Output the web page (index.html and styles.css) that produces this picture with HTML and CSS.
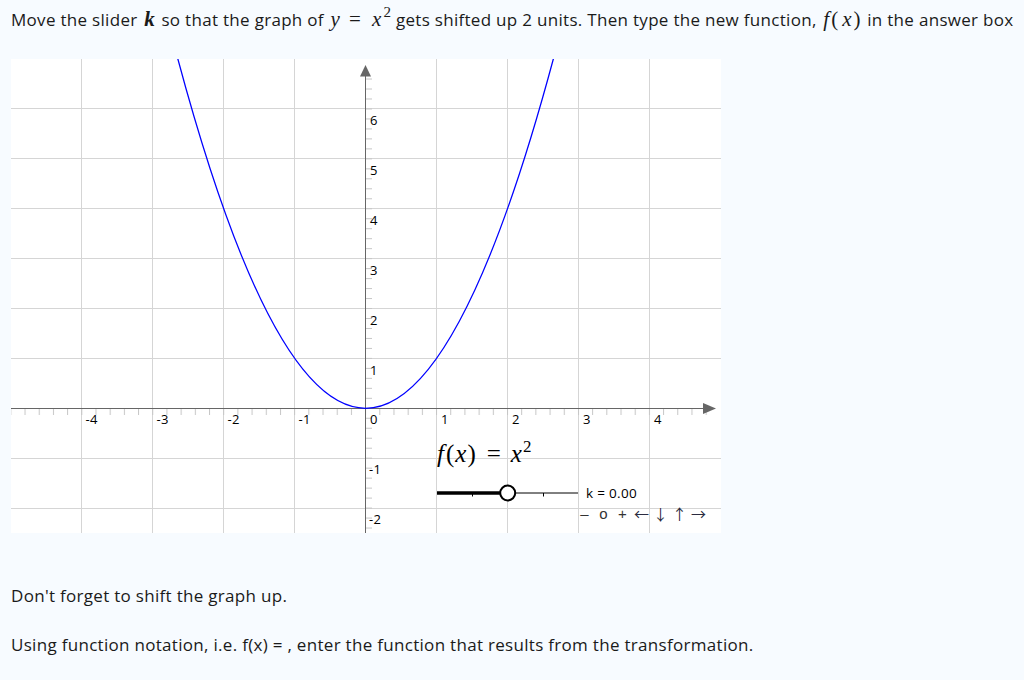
FILE: index.html
```html
<!DOCTYPE html>
<html>
<head>
<meta charset="utf-8">
<title>Shift the graph</title>
<link rel="stylesheet" href="styles.css">
</head>
<body>
<div class="page">
  <p class="prompt">Move the slider <span class="m mk">k</span> so that the graph of <span class="m">y</span><span class="mo">=</span><span class="m">x</span><sup class="msup">2</sup> gets shifted up 2 units. Then type the new function, <span class="m">f</span><span class="mn">(</span><span class="m">x</span><span class="mn">)</span> in the answer box</p>

  <div class="board">
    <svg class="plot" width="710" height="474" viewBox="0 0 710 474">
      <defs>
        <pattern id="xt" patternUnits="userSpaceOnUse" x="354.1" y="350" width="14.19" height="6">
          <rect class="tick" x="0" y="0" width="1" height="6"/>
        </pattern>
        <pattern id="yt" patternUnits="userSpaceOnUse" x="355" y="348.8" width="6" height="9.978">
          <rect class="tick" x="0" y="0" width="6" height="1"/>
        </pattern>
      </defs>
      <g class="grid">
        <line x1="70.5" y1="0" x2="70.5" y2="474"/>
        <line x1="141.5" y1="0" x2="141.5" y2="474"/>
        <line x1="212.5" y1="0" x2="212.5" y2="474"/>
        <line x1="283.5" y1="0" x2="283.5" y2="474"/>
        <line x1="425.5" y1="0" x2="425.5" y2="474"/>
        <line x1="496.5" y1="0" x2="496.5" y2="474"/>
        <line x1="567.5" y1="0" x2="567.5" y2="474"/>
        <line x1="638.5" y1="0" x2="638.5" y2="474"/>
        <line x1="0" y1="49.5" x2="710" y2="49.5"/>
        <line x1="0" y1="99.5" x2="710" y2="99.5"/>
        <line x1="0" y1="149.5" x2="710" y2="149.5"/>
        <line x1="0" y1="199.5" x2="710" y2="199.5"/>
        <line x1="0" y1="249.5" x2="710" y2="249.5"/>
        <line x1="0" y1="299.5" x2="710" y2="299.5"/>
        <line x1="0" y1="399.5" x2="710" y2="399.5"/>
        <line x1="0" y1="449.5" x2="710" y2="449.5"/>
      </g>
      <rect class="ticks" x="0" y="350" width="700" height="6" fill="url(#xt)"/>
      <rect class="ticks" x="355" y="18" width="6" height="456" fill="url(#yt)"/>
      <g class="axes">
        <line x1="0" y1="349.5" x2="696" y2="349.5"/>
        <line x1="354.5" y1="14" x2="354.5" y2="474"/>
        <polygon class="arrow" points="705,349.5 692,344 692,355"/>
        <polygon class="arrow" points="354.5,6 349,17.5 360,17.5"/>
      </g>
      <g class="labels">
        <text x="74.5" y="365">-4</text>
        <text x="145.5" y="365">-3</text>
        <text x="216.5" y="365">-2</text>
        <text x="287.5" y="365">-1</text>
        <text x="359" y="365">0</text>
        <text x="430" y="365">1</text>
        <text x="501" y="365">2</text>
        <text x="572" y="365">3</text>
        <text x="643" y="365">4</text>
        <text x="359" y="65.5">6</text>
        <text x="359" y="115.5">5</text>
        <text x="359" y="165.5">4</text>
        <text x="359" y="215.5">3</text>
        <text x="359" y="265.5">2</text>
        <text x="359" y="315.5">1</text>
        <text x="358" y="415">-1</text>
        <text x="358" y="465">-2</text>
      </g>
      <path class="curve" d="M163.03,-14.4 Q354.6,713.0 546.17,-14.4"/>
      <text class="fx" x="426" y="403"><tspan class="fi">f</tspan><tspan dx="2">(</tspan><tspan class="fi" dx="1">x</tspan><tspan dx="1">)</tspan><tspan dx="11">=</tspan><tspan class="fi" dx="10">x</tspan><tspan class="fsup" dx="1" dy="-10">2</tspan></text>
      <g class="slider">
        <line class="base" x1="426" y1="434" x2="567" y2="434"/>
        <line class="high" x1="426" y1="434" x2="497" y2="434"/>
        <line class="stick" x1="461.5" y1="434" x2="461.5" y2="437.5"/>
        <line class="stick" x1="532.5" y1="434" x2="532.5" y2="437.5"/>
        <circle class="knob" cx="496.7" cy="434" r="7.5"/>
        <text class="kval" x="575" y="438.5">k = 0.00</text>
      </g>
    </svg>
    <div class="navbar"><span class="nav">&ndash;</span><span class="nav">o</span><span class="nav">+</span><span class="nav arr">&larr;</span><span class="nav arr">&darr;</span><span class="nav arr">&uarr;</span><span class="nav arr">&rarr;</span></div>
  </div>

  <p class="note first">Don't forget to shift the graph up.</p>
  <p class="note">Using function notation, i.e. f(x) = , enter the function that results from the transformation.</p>
</div>
</body>
</html>
```

FILE: styles.css
```css
html, body {
  margin: 0;
  padding: 0;
  background: #f7fbff;
}
body {
  font-family: "Open Sans", "Liberation Sans", sans-serif;
  font-size: 17px;
  letter-spacing: 0.3px;
  color: #1a1a1a;
}
.page {
  padding: 0 11px;
}
.prompt {
  margin: 0;
  padding-top: 8px;
  height: 24px;
  line-height: 24px;
  white-space: nowrap;
}
.m {
  font-family: "Liberation Serif", "DejaVu Serif", serif;
  font-style: italic;
  font-size: 21px;
  line-height: 1;
  letter-spacing: 2px;
  margin-left: 2px;
}
.mk {
  font-weight: bold;
}
.mn {
  font-family: "Liberation Serif", "DejaVu Serif", serif;
  font-size: 21px;
  line-height: 1;
  letter-spacing: 2px;
}
.mo {
  font-family: "Liberation Serif", "DejaVu Serif", serif;
  font-size: 21px;
  line-height: 1;
  padding: 0 9px 0 7px;
}
.msup {
  font-family: "Liberation Serif", "DejaVu Serif", serif;
  font-size: 15px;
  line-height: 0;
  vertical-align: 9px;
}
.board {
  position: relative;
  width: 710px;
  height: 474px;
  margin-top: 27px;
  background: #ffffff;
  letter-spacing: 0;
}
.plot {
  display: block;
  overflow: hidden;
}
.grid line {
  stroke: #d5d5d5;
  stroke-width: 1;
}
.tick {
  fill: #c6c6c6;
}
.axes line {
  stroke: #666666;
  stroke-width: 1;
}
.axes .arrow {
  fill: #666666;
  stroke: none;
}
.labels text {
  font-family: "Open Sans", "DejaVu Sans", sans-serif;
  font-size: 13px;
  letter-spacing: 0.3px;
  fill: #000000;
}
.curve {
  fill: none;
  stroke: #0000ff;
  stroke-width: 1.3;
}
.fx {
  font-family: "Liberation Serif", "DejaVu Serif", serif;
  font-size: 25px;
  fill: #000000;
}
.fi {
  font-style: italic;
}
.fsup {
  font-size: 17px;
}
.slider .base {
  stroke: #000000;
  stroke-width: 1;
}
.slider .high {
  stroke: #000000;
  stroke-width: 3.5;
}
.slider .stick {
  stroke: #000000;
  stroke-width: 1;
}
.slider .knob {
  fill: #ffffff;
  stroke: #000000;
  stroke-width: 2;
}
.kval {
  font-family: "Open Sans", "DejaVu Sans", sans-serif;
  font-size: 13.5px;
  letter-spacing: 0.3px;
  fill: #000000;
}
.navbar {
  position: absolute;
  right: 13px;
  bottom: 10px;
  display: flex;
  font-family: "Liberation Sans", "DejaVu Sans", sans-serif;
  font-size: 15px;
  line-height: 18px;
  color: #333333;
  white-space: nowrap;
}
.nav {
  width: 19px;
  text-align: center;
}
.arr {
  font-family: "Noto Sans CJK SC", "DejaVu Sans", sans-serif;
  font-size: 15px;
  color: #2b2b40;
}
.note {
  margin: 0;
  line-height: 24px;
}
.note.first {
  margin-top: 51px;
  margin-bottom: 25px;
}
```
